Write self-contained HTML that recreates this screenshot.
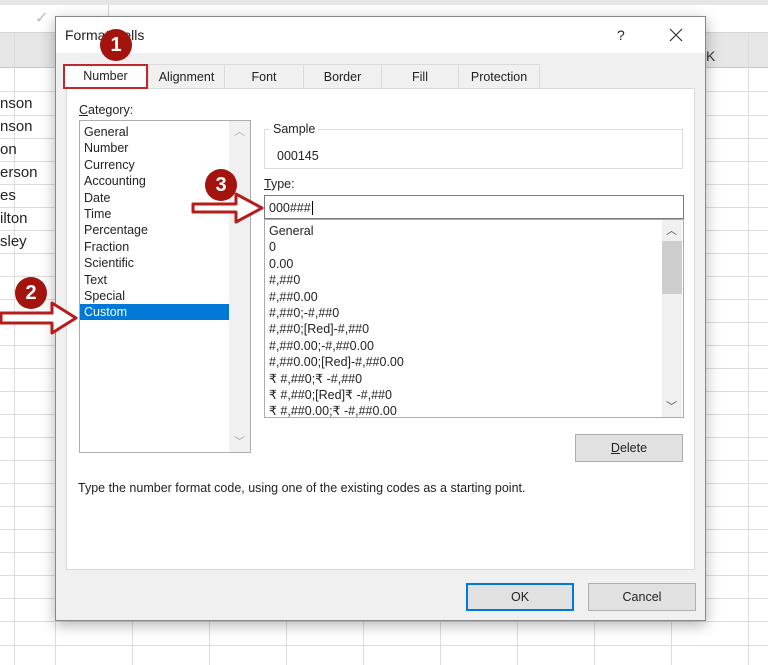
<!DOCTYPE html>
<html><head><meta charset="utf-8"><style>
*{margin:0;padding:0;box-sizing:border-box}
body{width:768px;height:665px;position:relative;overflow:hidden;background:#fff;font-family:"Liberation Sans",Arial,sans-serif;font-size:12.5px;color:#222}
.a{position:absolute}
.hl{position:absolute;left:0;width:768px;height:1px;background:#dcdcdc}
.vl{position:absolute;top:33px;width:1px;height:632px;background:#dcdcdc}
.it{position:absolute;left:4px;line-height:16.4px;white-space:nowrap}
.tab{position:absolute;top:64px;height:24px;background:#f0f0f0;border:1px solid #dadada;border-bottom:none;text-align:center;line-height:24px}
.btn{position:absolute;background:#e1e1e1;border:1px solid #adadad;text-align:center}
.badge{position:absolute;width:32px;height:32px;border-radius:50%;background:#a3140f;color:#fff;font-weight:bold;font-size:20px;text-align:center;line-height:32px}
</style></head><body>
<div class="a" style="left:0;top:0;width:768px;height:6px;background:#e6e6e6"></div>
<div class="a" style="left:0;top:5px;width:768px;height:28px;background:#fff;border-bottom:1px solid #d4d4d4"></div>
<div class="a" style="left:35px;top:8px;color:#bbb;font-size:16px">✓</div>
<div class="a" style="left:108px;top:5px;width:1px;height:28px;background:#d4d4d4"></div>
<div class="a" style="left:0;top:33px;width:768px;height:34px;background:#e6e6e6"></div>
<div class="a" style="left:706px;top:48px;font-size:14px;color:#333">K</div>
<div class="hl" style="top:67px;background:#c8c8c8"></div>
<div class="hl" style="top:91px"></div><div class="hl" style="top:115px"></div><div class="hl" style="top:138px"></div><div class="hl" style="top:161px"></div><div class="hl" style="top:184px"></div><div class="hl" style="top:207px"></div><div class="hl" style="top:230px"></div><div class="hl" style="top:253px"></div><div class="hl" style="top:276px"></div><div class="hl" style="top:299px"></div><div class="hl" style="top:322px"></div><div class="hl" style="top:345px"></div><div class="hl" style="top:368px"></div><div class="hl" style="top:391px"></div><div class="hl" style="top:414px"></div><div class="hl" style="top:437px"></div><div class="hl" style="top:460px"></div><div class="hl" style="top:483px"></div><div class="hl" style="top:506px"></div><div class="hl" style="top:529px"></div><div class="hl" style="top:552px"></div><div class="hl" style="top:575px"></div><div class="hl" style="top:598px"></div><div class="hl" style="top:621px"></div><div class="hl" style="top:645px"></div>
<div class="vl" style="left:14px"></div><div class="vl" style="left:55px"></div><div class="vl" style="left:132px"></div><div class="vl" style="left:209px"></div><div class="vl" style="left:286px"></div><div class="vl" style="left:363px"></div><div class="vl" style="left:440px"></div><div class="vl" style="left:517px"></div><div class="vl" style="left:594px"></div><div class="vl" style="left:671px"></div><div class="vl" style="left:748px"></div>
<div class="a" style="left:0;top:92px;font-size:15px;line-height:23px;color:#222;white-space:pre">nson
nson
on
erson
es
ilton
sley</div>
<div class="a" style="left:55px;top:16px;width:651px;height:605px;background:#f0f0f0;border:1px solid #888;box-shadow:0 4px 14px rgba(0,0,0,.3)"></div>
<div class="a" style="left:56px;top:17px;width:649px;height:36px;background:#fff"></div>
<div class="a" style="left:65px;top:27px;font-size:14px">Format Cells</div>
<div class="a" style="left:617px;top:27px;font-size:14px">?</div>
<svg class="a" style="left:669px;top:28px" width="14" height="14"><path d="M1 1L13 13M13 1L1 13" stroke="#333" stroke-width="1.2"/></svg>
<div class="tab" style="left:148px;width:77px">Alignment</div>
<div class="tab" style="left:224px;width:80px">Font</div>
<div class="tab" style="left:303px;width:79px">Border</div>
<div class="tab" style="left:381px;width:78px">Fill</div>
<div class="tab" style="left:458px;width:82px">Protection</div>
<div class="a" style="left:66px;top:88px;width:629px;height:482px;background:#fff;border:1px solid #dadada"></div>
<div class="a" style="left:63px;top:64px;width:85px;height:25px;background:#fff;border:2px solid #c0282d;text-align:center;line-height:21px">Number</div>
<div class="a" style="left:79px;top:103px"><u>C</u>ategory:</div>
<div class="a" style="left:79px;top:120px;width:172px;height:333px;border:1px solid #adadad;background:#fff">
<div class="a" style="left:149px;top:0;width:21px;height:331px;background:#f0f0f0"></div>
<div class="a" style="left:154px;top:2px;color:#aaa;font-size:11px">︿</div>
<div class="a" style="left:154px;top:312px;color:#aaa;font-size:11px">﹀</div>
<div class="it" style="top:3px">General</div><div class="it" style="top:19.4px">Number</div><div class="it" style="top:35.8px">Currency</div><div class="it" style="top:52.2px">Accounting</div><div class="it" style="top:68.6px">Date</div><div class="it" style="top:85px">Time</div><div class="it" style="top:101.4px">Percentage</div><div class="it" style="top:117.8px">Fraction</div><div class="it" style="top:134.2px">Scientific</div><div class="it" style="top:150.6px">Text</div><div class="it" style="top:167px">Special</div>
<div class="a" style="left:0;top:183px;width:149px;height:16px;background:#0078d7"></div>
<div class="it" style="top:183.4px;color:#fff">Custom</div>
</div>
<div class="a" style="left:264px;top:129px;width:419px;height:40px;border:1px solid #dcdcdc"></div>
<div class="a" style="left:270px;top:122px;background:#fff;padding:0 3px">Sample</div>
<div class="a" style="left:277px;top:149px">000145</div>
<div class="a" style="left:264px;top:177px"><u>T</u>ype:</div>
<div class="a" style="left:264px;top:195px;width:420px;height:24px;border:1px solid #7a7a7a;background:#fff;padding:5px 4px">000###<span style="border-left:1px solid #000;margin-left:1px"></span></div>
<div class="a" style="left:264px;top:219px;width:420px;height:199px;border:1px solid #adadad;background:#fff">
<div class="a" style="left:397px;top:0;width:20px;height:197px;background:#f0f0f0"></div>
<div class="a" style="left:397px;top:21px;width:20px;height:53px;background:#cdcdcd"></div>
<div class="a" style="left:401px;top:2px;color:#555;font-size:11px">︿</div>
<div class="a" style="left:401px;top:178px;color:#555;font-size:11px">﹀</div>
<div class="it" style="top:3px">General</div><div class="it" style="top:19.4px">0</div><div class="it" style="top:35.8px">0.00</div><div class="it" style="top:52.2px">#,##0</div><div class="it" style="top:68.6px">#,##0.00</div><div class="it" style="top:85px">#,##0;-#,##0</div><div class="it" style="top:101.4px">#,##0;[Red]-#,##0</div><div class="it" style="top:117.8px">#,##0.00;-#,##0.00</div><div class="it" style="top:134.2px">#,##0.00;[Red]-#,##0.00</div><div class="it" style="top:150.6px">₹ #,##0;₹ -#,##0</div><div class="it" style="top:167px">₹ #,##0;[Red]₹ -#,##0</div><div class="it" style="top:183.4px">₹ #,##0.00;₹ -#,##0.00</div>
</div>
<div class="btn" style="left:575px;top:434px;width:108px;height:28px;line-height:26px"><u>D</u>elete</div>
<div class="a" style="left:78px;top:481px">Type the number format code, using one of the existing codes as a starting point.</div>
<div class="btn" style="left:466px;top:583px;width:108px;height:28px;line-height:24px;border:2px solid #0078d7">OK</div>
<div class="btn" style="left:588px;top:583px;width:108px;height:28px;line-height:26px">Cancel</div>
<svg class="a" style="left:0;top:300px" width="80" height="36"><path d="M1 13H52V3L76 18L52 33V23H1Z" fill="#fff" stroke="#b71c1c" stroke-width="3" stroke-linejoin="round"/></svg>
<svg class="a" style="left:190px;top:192px" width="76" height="32"><path d="M3 12H46V2L72 16L46 30V20H3Z" fill="#fff" stroke="#b71c1c" stroke-width="3" stroke-linejoin="round"/></svg>
<div class="badge" style="left:100px;top:29px">1</div>
<div class="badge" style="left:15px;top:277px">2</div>
<div class="badge" style="left:205px;top:169px">3</div>
</body></html>
